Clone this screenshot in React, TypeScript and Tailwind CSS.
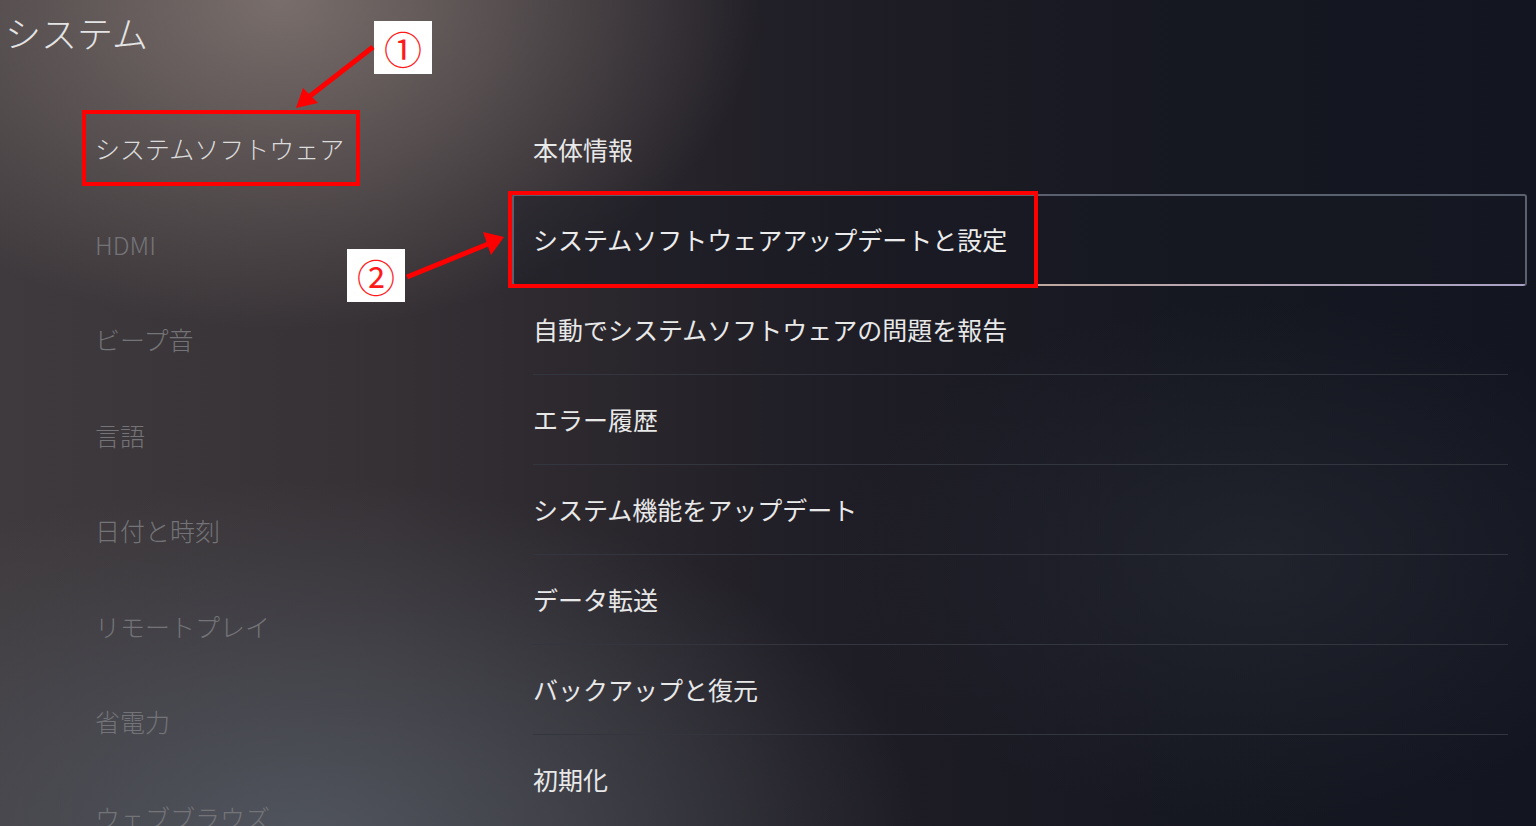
import React from 'react'

const leftItems = [
  'システムソフトウェア',
  'HDMI',
  'ビープ音',
  '言語',
  '日付と時刻',
  'リモートプレイ',
  '省電力',
  'ウェブブラウズ',
]

const rightItems = [
  '本体情報',
  'システムソフトウェアアップデートと設定',
  '自動でシステムソフトウェアの問題を報告',
  'エラー履歴',
  'システム機能をアップデート',
  'データ転送',
  'バックアップと復元',
  '初期化',
]

const font = { fontFamily: '"Noto Sans CJK JP", "Noto Sans", sans-serif' }

// white label with a circled number, placed over the screenshot
function Callout({ label, className }: { label: string; className: string }) {
  return (
    <div className={`absolute flex items-center justify-center bg-white text-[38px] leading-none text-[#ff1a1a] ${className}`}>
      {label}
    </div>
  )
}

export default function App() {
  return (
    <div
      className="relative h-[826px] w-full overflow-hidden bg-[#141620] bg-[radial-gradient(ellipse_480px_330px_at_280px_0px,rgba(132,120,116,0.85),transparent),radial-gradient(ellipse_620px_360px_at_300px_840px,rgba(84,90,100,0.85),transparent),radial-gradient(ellipse_420px_260px_at_1250px_560px,rgba(40,42,52,0.6),transparent),linear-gradient(90deg,#3f3a3d_0%,#363135_25%,#201e26_52%,#151721_78%,#131520_100%)]"
      style={font}
    >
      <div className="h-[101px] pl-[5px] pt-[8px] text-[36px] font-light leading-[48px] text-[#e4e4e4]">システム</div>

      <div className="flex">
        {/* left category list */}
        <div className="w-[512px] shrink-0 pl-[95px]">
          {leftItems.map((item, i) => (
            <div
              key={item}
              className={`flex h-[95.5px] items-center text-[25px] font-light ${i === 0 ? 'text-[#dcdcdc]' : 'text-[#747478]'}`}
            >
              {item}
            </div>
          ))}
        </div>

        {/* right settings list */}
        <div className="mt-[4px] flex-1 pr-[9px]">
          {rightItems.map((item, i) => {
            const selected = i === 1
            const divider = i >= 2 && i < rightItems.length - 1
            return (
              <div key={item} className="relative h-[90px]">
                {selected ? (
                  <div className="relative flex h-[92px] -translate-y-px items-center rounded-[3px] border-2 border-[#5a606e] bg-[#171a24]/40 pl-[19px] text-[25px] text-[#ececec]">
                    {item}
                    <span className="absolute -bottom-[2px] left-0 right-0 h-[2px] rounded-b bg-[linear-gradient(90deg,#6a6a72,#c9ab86_30%,#b7a6b4_70%,#a9a2c4)]" />
                  </div>
                ) : (
                  <div className="flex h-full items-center pl-[21px] text-[25px] text-[#e8e8e8]">{item}</div>
                )}
                {divider && <div className="absolute bottom-0 left-[21px] right-[19px] h-px bg-[#34363f]" />}
              </div>
            )
          })}
        </div>
      </div>

      {/* annotation overlays */}
      <div className="absolute left-[82px] top-[110px] h-[76px] w-[278px] border-4 border-[#ff0000]" />
      <div className="absolute left-[508px] top-[191px] h-[97px] w-[530px] border-4 border-[#ff0000]" />
      <Callout label="①" className="left-[374px] top-[21px] h-[53px] w-[58px]" />
      <Callout label="②" className="left-[347px] top-[249px] h-[53px] w-[58px]" />

      <svg className="pointer-events-none absolute left-0 top-0" width="1536" height="826">
        <line x1="373" y1="47" x2="310" y2="96" stroke="#ff0000" strokeWidth="5" />
        <polygon points="296,108 303,88 318,103" fill="#ff0000" />
        <line x1="407" y1="277" x2="488" y2="244" stroke="#ff0000" strokeWidth="5" />
        <polygon points="504,237 483,232 491,255" fill="#ff0000" />
      </svg>
    </div>
  )
}
